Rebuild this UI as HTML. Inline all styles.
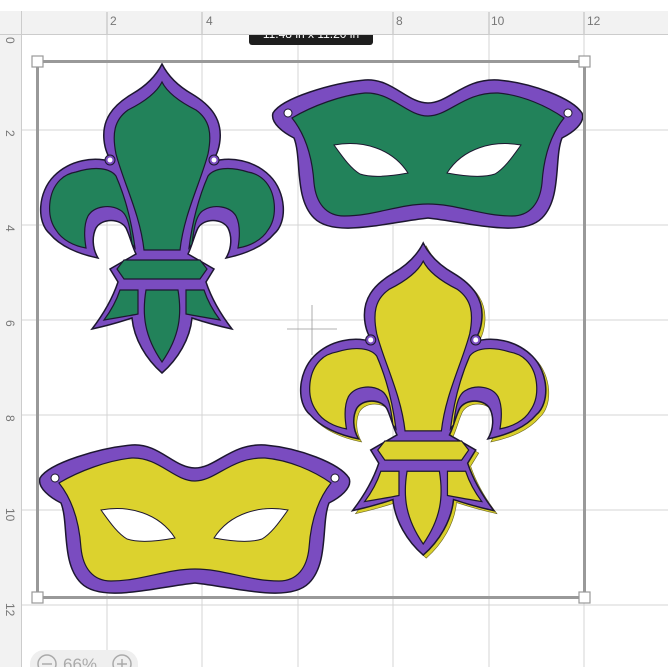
<!DOCTYPE html>
<html><head><meta charset="utf-8"><style>
html,body{margin:0;padding:0;width:668px;height:667px;overflow:hidden;background:#fff;font-family:"Liberation Sans",sans-serif}
.abs{position:absolute}
.in{fill:inherit}
</style></head><body>
<div class="abs" style="left:0;top:0;width:668px;height:11px;background:#fff;border-bottom:1px solid #d0d0d0"></div>
<svg class="abs" style="left:0;top:0" width="668" height="667" viewBox="0 0 668 667">
<defs>
<path id="flo" d="M122,0 C116,12 106,22 92,30 C72,42 62,56 64,76 C65,86 68,92 72,98 C54,92 30,96 14,112 C-2,128 -4,158 10,170 C20,182 38,190 58,194 C52,184 52,172 56,164 C62,154 80,154 86,164 C90,172 92,182 96,190 L70,205 L78,218 C72,236 62,252 52,265 C66,262 80,258 92,254 C94,275 106,295 122,309 C138,295 150,275 152,254 C164,258 178,262 192,265 C182,252 172,236 166,218 L174,205 L148,190 C152,182 154,172 158,164 C164,154 182,154 188,164 C192,172 192,184 186,194 C206,190 224,182 234,170 C248,158 246,128 230,112 C214,96 190,92 172,98 C176,92 179,86 180,76 C182,56 172,42 152,30 C138,22 128,12 122,0 Z"/>
<g id="fl">
<use href="#flo" fill="#7a4cc0" stroke="#1d1730" stroke-width="1.5"/>
<circle cx="174" cy="96" r="5" fill="#7a4cc0" stroke="#1d1730"/><circle cx="174" cy="96" r="2.5" fill="#fff"/>
<circle cx="70" cy="96" r="5" fill="#7a4cc0" stroke="#1d1730"/><circle cx="70" cy="96" r="2.5" fill="#fff"/>
<g class="in" stroke="#1d1730" stroke-width="1.2">
<path d="M122,18 C116,30 100,40 88,46 C74,56 72,70 76,90 C84,120 100,150 104,186 L140,186 C144,150 160,120 168,90 C172,70 170,56 156,46 C144,40 128,30 122,18 Z"/>
<path d="M36,108 C55,102 70,104 76,112 C86,135 92,160 95,184 L92,180 C90,164 88,150 80,146 C70,140 54,142 48,152 C44,160 44,172 46,184 C34,182 22,176 16,166 C6,152 8,128 20,116 C24,112 30,109 36,108 Z"/>
<path d="M208,108 C189,102 174,104 168,112 C158,135 152,160 149,184 L152,180 C154,164 156,150 164,146 C174,140 190,142 196,152 C200,160 200,172 198,184 C210,182 222,176 228,166 C238,152 236,128 224,116 C220,112 214,109 208,108 Z"/>
<path d="M84,196 L160,196 L167,205 L160,215 L84,215 L77,205 Z"/>
<path d="M106,226 L138,226 C142,250 140,272 122,298 C104,272 102,250 106,226 Z"/>
<path d="M146,226 L164,226 C168,238 174,248 180,256 C168,254 156,252 146,250 Z"/>
<path d="M98,226 L80,226 C76,238 70,248 64,256 C76,254 88,252 98,250 Z"/>
</g>
</g>
<g id="mk">
<path d="M1,35 C10,20 60,5 93,2 C120,0 135,25 156,25 C177,25 192,0 226,2 C260,5 300,20 310,35 C314,45 300,55 290,60 C282,80 290,120 270,140 C250,160 200,145 156,140 C112,145 62,160 42,140 C22,120 30,80 22,60 C12,55 -2,45 1,35 Z" fill="#7a4cc0" stroke="#1d1730" stroke-width="1.5"/>
<path class="in" d="M20,40 C40,28 70,17 93,15 C120,14 135,38 156,38 C177,38 192,14 226,15 C250,17 275,28 292,40 C280,55 272,75 270,105 C268,125 258,138 240,138 C210,138 185,126 156,126 C127,126 102,138 72,138 C54,138 44,125 42,105 C40,75 32,55 20,40 Z" stroke="#1d1730" stroke-width="1.2"/>
<path d="M62,67 C90,62 120,70 136,95 C120,98 100,100 88,96 C78,90 70,78 62,67 Z" fill="#fff" stroke="#1d1730"/>
<path d="M249,67 C221,62 191,70 175,95 C191,98 211,100 223,96 C233,90 241,78 249,67 Z" fill="#fff" stroke="#1d1730"/>
<circle cx="16" cy="35" r="4" fill="#fff" stroke="#1d1730"/>
<circle cx="296" cy="35" r="4" fill="#fff" stroke="#1d1730"/>
</g>
</defs>
<g stroke="#d4d4d4" stroke-width="1">
<line x1="107" y1="35" x2="107" y2="667"/><line x1="202" y1="35" x2="202" y2="667"/><line x1="298" y1="35" x2="298" y2="667"/><line x1="393" y1="35" x2="393" y2="667"/><line x1="489" y1="35" x2="489" y2="667"/><line x1="584" y1="35" x2="584" y2="667"/>
<line x1="21" y1="130" x2="668" y2="130"/><line x1="21" y1="225" x2="668" y2="225"/><line x1="21" y1="320" x2="668" y2="320"/><line x1="21" y1="415" x2="668" y2="415"/><line x1="21" y1="510" x2="668" y2="510"/><line x1="21" y1="605" x2="668" y2="605"/>
</g>
<rect x="0" y="11" width="668" height="24" fill="#f2f2f2"/>
<rect x="0" y="11" width="21" height="656" fill="#f2f2f2"/>
<line x1="0" y1="34.5" x2="668" y2="34.5" stroke="#ccc"/>
<line x1="21.5" y1="11" x2="21.5" y2="667" stroke="#ccc"/>
<g stroke="#bbb">
<line x1="107" y1="12" x2="107" y2="34"/><line x1="202" y1="12" x2="202" y2="34"/><line x1="298" y1="12" x2="298" y2="34"/><line x1="393" y1="12" x2="393" y2="34"/><line x1="489" y1="12" x2="489" y2="34"/><line x1="584" y1="12" x2="584" y2="34"/>
</g>
<g fill="#777" font-family="Liberation Sans" font-size="12">
<text x="110" y="25">2</text><text x="206" y="25">4</text><text x="301" y="25">6</text><text x="396" y="25">8</text><text x="491" y="25">10</text><text x="587" y="25">12</text>
<text transform="translate(6,37) rotate(90)">0</text><text transform="translate(6,130) rotate(90)">2</text><text transform="translate(6,225) rotate(90)">4</text><text transform="translate(6,320) rotate(90)">6</text><text transform="translate(6,415) rotate(90)">8</text><text transform="translate(6,508) rotate(90)">10</text><text transform="translate(6,603) rotate(90)">12</text>
</g>
<rect x="249" y="30" width="124" height="15" rx="3" fill="#1e1e1e"/>
<text x="311" y="38" fill="#fff" font-size="12" text-anchor="middle" font-family="Liberation Sans">11.48  in x 11.20  in</text>
<rect x="240" y="11" width="140" height="23" fill="#f2f2f2"/>
<line x1="240" y1="34.5" x2="380" y2="34.5" stroke="#ccc"/>
<line x1="312" y1="305" x2="312" y2="355" stroke="#999" stroke-width="0.8"/>
<line x1="287" y1="329" x2="337" y2="329" stroke="#999" stroke-width="0.8"/>
<g transform="translate(40,64)"><use href="#fl" fill="#22825a"/></g>
<g transform="translate(272,78)"><use href="#mk" fill="#22825a"/></g>
<g transform="translate(303,246) scale(1.01)"><use href="#flo" fill="#d8ce2a" stroke="#6b6420" stroke-width="0.6"/></g>
<g transform="translate(300,243) scale(1.01)"><use href="#fl" fill="#dcd22e"/></g>
<g transform="translate(39,443)"><use href="#mk" fill="#dcd22e"/></g>
<rect x="37.5" y="61.5" width="547" height="536" fill="none" stroke="#999" stroke-width="3"/>
<g fill="#fff" stroke="#999" stroke-width="1.2">
<rect x="32" y="56" width="11" height="11"/><rect x="579" y="56" width="11" height="11"/><rect x="32" y="592" width="11" height="11"/><rect x="579" y="592" width="11" height="11"/>
</g>
<rect x="30" y="650" width="108" height="30" rx="14" fill="#efefef"/>
<circle cx="47" cy="664" r="9" fill="none" stroke="#aaa" stroke-width="1.5"/>
<line x1="42" y1="664" x2="52" y2="664" stroke="#aaa" stroke-width="1.5"/>
<text x="63" y="670" fill="#aaa" font-size="17" font-family="Liberation Sans">66%</text>
<circle cx="122" cy="664" r="9" fill="none" stroke="#aaa" stroke-width="1.5"/>
<line x1="117" y1="664" x2="127" y2="664" stroke="#aaa" stroke-width="1.5"/>
<line x1="122" y1="659" x2="122" y2="669" stroke="#aaa" stroke-width="1.5"/>
</svg>
</body></html>
